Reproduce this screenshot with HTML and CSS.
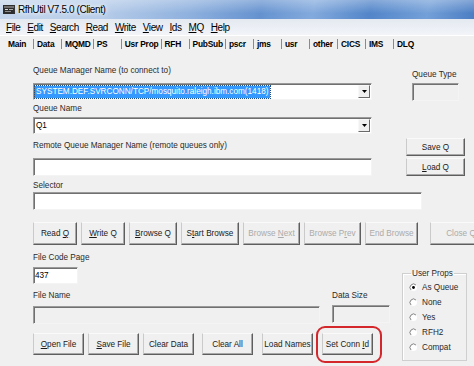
FILE: index.html
```html
<!DOCTYPE html>
<html lang="en">
<head>
    <meta charset="UTF-8">
    <meta name="viewport" content="width=device-width, initial-scale=1.0">
    <title>RfhUtil V7.5.0 (Client)</title>
    <link rel="stylesheet" href="styles.css">
</head>
<body>
    <div class="window">
        <div class="titlebar">
            <svg class="app-icon" viewBox="0 0 12 9" width="12" height="9">
                <rect width="12" height="9" fill="#2d2d2d"/>
                <rect x="1" y="1" width="10" height="2" fill="#707070"/>
                <rect x="2" y="4" width="3" height="1" fill="#d8d8d8"/>
                <rect x="6" y="4" width="4" height="1" fill="#b0b0b0"/>
                <rect x="2" y="6" width="6" height="1" fill="#8c8c8c"/>
            </svg>
            <span class="title">RfhUtil V7.5.0 (Client)</span>
        </div>

        <div class="menubar">
            <span><u>F</u>ile</span>
            <span><u>E</u>dit</span>
            <span><u>S</u>earch</span>
            <span><u>R</u>ead</span>
            <span><u>W</u>rite</span>
            <span><u>V</u>iew</span>
            <span><u>I</u>ds</span>
            <span><u>M</u>Q</span>
            <span><u>H</u>elp</span>
        </div>

        <div class="tabs">
            <span class="tab active">Main</span>
            <span class="tab">Data</span>
            <span class="tab">MQMD</span>
            <span class="tab">PS</span>
            <span class="tab">Usr Prop</span>
            <span class="tab">RFH</span>
            <span class="tab">PubSub</span>
            <span class="tab">pscr</span>
            <span class="tab">jms</span>
            <span class="tab">usr</span>
            <span class="tab">other</span>
            <span class="tab">CICS</span>
            <span class="tab">IMS</span>
            <span class="tab">DLQ</span>
        </div>

        <div class="client">
            <div class="frame-edge"></div>
            <div class="page">
                <!-- queue manager / queue -->
                <div class="top">
                    <div class="main-col">
                        <span class="lbl">Queue Manager Name (to connect to)</span>
                        <div class="combo">
                            <span class="selected">SYSTEM.DEF.SVRCONN/TCP/mosquito.raleigh.ibm.com(1418)</span>
                            <span class="drop-btn"><svg viewBox="0 0 5 3" width="5" height="3"><path d="M0 0h5L2.5 3z" fill="#000"/></svg></span>
                        </div>
                        <span class="lbl lbl-qn">Queue Name</span>
                        <div class="combo combo-qn">
                            <span class="value">Q1</span>
                            <span class="drop-btn"><svg viewBox="0 0 5 3" width="5" height="3"><path d="M0 0h5L2.5 3z" fill="#000"/></svg></span>
                        </div>
                        <span class="lbl">Remote Queue Manager Name (remote queues only)</span>
                        <div class="field"></div>
                    </div>
                    <div class="side-col">
                        <span class="lbl qtype-lbl">Queue Type</span>
                        <div class="field readonly qtype"></div>
                        <button class="btn btn-side save-q">Save Q</button>
                        <button class="btn btn-side load-q"><u>L</u>oad Q</button>
                    </div>
                </div>

                <span class="lbl lbl-sel">Selector</span>
                <div class="field selector"></div>

                <div class="btn-row browse-row">
                    <button class="btn">Read <u>Q</u></button>
                    <button class="btn"><u>W</u>rite Q</button>
                    <button class="btn"><u>B</u>rowse Q</button>
                    <button class="btn">S<u>t</u>art Browse</button>
                    <button class="btn" disabled>Browse <u>N</u>ext</button>
                    <button class="btn" disabled>Browse P<u>r</u>ev</button>
                    <button class="btn" disabled>End Browse</button>
                    <button class="btn close-q" disabled>Close Q</button>
                </div>

                <!-- file section -->
                <div class="bottom">
                    <div class="bottom-main">
                        <span class="lbl">File Code Page</span>
                        <div class="field codepage"><span class="value">437</span></div>
                        <div class="file-row">
                            <div class="file-name">
                                <span class="lbl">File Name</span>
                                <div class="field readonly"></div>
                            </div>
                            <div class="data-size">
                                <span class="lbl">Data Size</span>
                                <div class="field readonly"></div>
                            </div>
                        </div>
                        <div class="btn-row file-row-btns">
                            <button class="btn"><u>O</u>pen File</button>
                            <button class="btn"><u>S</u>ave File</button>
                            <button class="btn">Clear Data</button>
                            <button class="btn">Clear All</button>
                            <button class="btn">Load Names</button>
                            <span class="callout"><button class="btn">Set Conn <u>I</u>d</button></span>
                        </div>
                    </div>

                    <fieldset class="group">
                        <legend>User Props</legend>
                        <label class="radio">
                            <svg viewBox="0 0 12 12" width="9" height="9"><circle cx="6" cy="6" r="4.6" fill="#fff"/><path d="M9.3 2.7A4.6 4.6 0 0 0 2.7 9.3" stroke="#808080" stroke-width="1.3" fill="none"/><circle cx="6" cy="6" r="1.9" fill="#000"/></svg>
                            As Queue
                        </label>
                        <label class="radio">
                            <svg viewBox="0 0 12 12" width="9" height="9"><circle cx="6" cy="6" r="4.6" fill="#fff"/><path d="M9.3 2.7A4.6 4.6 0 0 0 2.7 9.3" stroke="#808080" stroke-width="1.3" fill="none"/></svg>
                            None
                        </label>
                        <label class="radio">
                            <svg viewBox="0 0 12 12" width="9" height="9"><circle cx="6" cy="6" r="4.6" fill="#fff"/><path d="M9.3 2.7A4.6 4.6 0 0 0 2.7 9.3" stroke="#808080" stroke-width="1.3" fill="none"/></svg>
                            Yes
                        </label>
                        <label class="radio">
                            <svg viewBox="0 0 12 12" width="9" height="9"><circle cx="6" cy="6" r="4.6" fill="#fff"/><path d="M9.3 2.7A4.6 4.6 0 0 0 2.7 9.3" stroke="#808080" stroke-width="1.3" fill="none"/></svg>
                            RFH2
                        </label>
                        <label class="radio">
                            <svg viewBox="0 0 12 12" width="9" height="9"><circle cx="6" cy="6" r="4.6" fill="#fff"/><path d="M9.3 2.7A4.6 4.6 0 0 0 2.7 9.3" stroke="#808080" stroke-width="1.3" fill="none"/></svg>
                            Compat
                        </label>
                    </fieldset>
                </div>
            </div>
        </div>
    </div>
</body>
</html>
```

FILE: styles.css
```css
* {
    margin: 0;
    padding: 0;
    box-sizing: border-box;
}

body {
    width: 474px;
    height: 366px;
    overflow: hidden;
    font-family: "Liberation Sans", Arial, sans-serif;
    background: #f0f0f0;
    color: #000;
}

.window {
    width: 474px;
    height: 366px;
}

/* title bar */
.titlebar {
    height: 19px;
    display: flex;
    align-items: center;
    padding-left: 3px;
    background:
        linear-gradient(180deg, rgba(255, 255, 255, 0.3), rgba(255, 255, 255, 0) 70%),
        linear-gradient(100deg, #c4d6ec 0%, #b6cce9 22%, #8fb1de 40%, #6592cf 55%, #83aadd 66%, #5285c9 78%, #74a0d8 90%, #4b7dc3 100%);
}

.app-icon {
    margin-right: 3px;
}

.title {
    font-size: 10px;
    letter-spacing: -0.4px;
    text-shadow: 0 0 4px #fff, 0 0 6px #fff;
}

/* menu */
.menubar {
    height: 17px;
    display: flex;
    align-items: center;
    gap: 7px;
    padding-left: 6px;
    font-size: 10px;
    letter-spacing: -0.45px;
    background: linear-gradient(#e4e9f1, #f2f4f8);
    border-bottom: 1px solid #fff;
}

/* tab strip */
.tabs {
    height: 16px;
    display: flex;
    align-items: center;
    padding-left: 5px;
    font-size: 8.4px;
    font-weight: bold;
    letter-spacing: -0.2px;
}

.tab {
    min-width: 28px;
    height: 10px;
    line-height: 10px;
    padding: 0 2px 0 3px;
    border-left: 1px solid #8a8a8a;
    white-space: nowrap;
}

.tab.active {
    border-left: none;
    padding-left: 3px;
}

/* client area */
.client {
    display: flex;
    height: 314px;
}

.frame-edge {
    width: 3px;
    margin-top: 3px;
    background: #5a86c2;
}

.page {
    flex: 1;
    padding: 12px 0 0 33px;
    font-size: 8.2px;
}

.lbl {
    display: block;
    height: 13px;
    line-height: 13px;
    margin-top: 5px;
    white-space: nowrap;
    color: #2a2a2a;
}

.main-col > .lbl:first-child,
.bottom-main > .lbl:first-child {
    margin-top: 0;
}

.top {
    display: flex;
}

.main-col {
    width: 339px;
}

.side-col {
    margin-left: 34px;
    width: 60px;
}

.field,
.combo {
    background: #fff;
    border: 1px solid;
    border-color: #9a9a9a #f4f4f4 #f4f4f4 #9a9a9a;
    box-shadow: inset 1px 1px #707070;
}

.field {
    height: 18px;
    margin-top: 6px;
}

.field.readonly {
    background: #f0f0f0;
}

.combo {
    height: 17px;
    margin-top: 6px;
    display: flex;
    align-items: center;
    padding-left: 1px;
}

.combo-qn {
    margin-top: 2px;
}

.lbl-qn {
    margin-top: 2px;
}

.value {
    padding-left: 1px;
    line-height: 15px;
}

.selected {
    background: #3399ff;
    color: #fff;
    line-height: 12px;
    padding: 0 1px;
    outline: 1px dotted #1a4f8c;
}

.drop-btn {
    margin-left: auto;
    margin-right: 1px;
    width: 12px;
    height: 13px;
    display: flex;
    align-items: center;
    justify-content: center;
    background: #f0f0f0;
    border: 1px solid;
    border-color: #f8f8f8 #6a6a6a #6a6a6a #f8f8f8;
}

.qtype-lbl {
    margin: 4px 0 0 6px;
}

.qtype {
    width: 47px;
    margin: 2px 0 0 6px;
}

/* buttons */
.btn {
    height: 23px;
    font-family: inherit;
    font-size: 8.2px;
    color: #1a1a1a;
    background: #f0f0f0;
    border: 1px solid;
    border-color: #fafafa #5e5e5e #5e5e5e #cacaca;
    box-shadow: inset -1px -1px #a8a8a8;
    white-space: nowrap;
}

.btn:disabled {
    color: #ababab;
}

.btn-side {
    display: block;
    width: 59px;
    height: 18px;
}

.save-q {
    margin-top: 37px;
}

.load-q {
    margin-top: 2px;
}

.lbl-sel {
    margin-top: 3px;
}

.selector {
    width: 389px;
    margin-top: 0;
}

.btn-row {
    display: grid;
    column-gap: 4px;
}

.browse-row {
    margin-top: 12px;
    grid-template-columns: 44px 44px 48px 58px 57px 57px 53px 70px;
}

.close-q {
    margin-left: 8px;
}

/* file section */
.bottom {
    display: flex;
    margin-top: 6px;
}

.bottom-main {
    width: 357px;
}

.codepage {
    width: 45px;
    height: 17px;
    margin-top: 3px;
}

.file-row {
    display: flex;
    gap: 12px;
}

.file-name {
    width: 287px;
}

.file-name .field {
    margin-top: 4px;
}

.data-size {
    width: 58px;
}

.data-size .field {
    margin-top: 3px;
}

.file-row-btns {
    margin-top: 9px;
    grid-template-columns: 51px 51px 51px 55px 56px 56px;
}

.file-row-btns .btn {
    width: 51px;
    height: 22px;
    justify-self: end;
}

.callout {
    position: relative;
    display: flex;
    justify-self: end;
}

.callout::after {
    content: '';
    position: absolute;
    left: -6px;
    right: -9px;
    top: -7px;
    bottom: -8px;
    border: 2px solid #d4272c;
    border-radius: 9px;
}

/* user props group */
.group {
    width: 65px;
    height: 93px;
    margin: 17px 0 0 12px;
    padding: 1px 0 0 6px;
    border: 1px solid #cfcfcf;
    box-shadow: inset 1px 1px #fff;
}

.group legend {
    font-size: 8.2px;
    line-height: 11px;
    padding: 0 1px;
    margin-left: 2px;
    color: #2a2a2a;
}

.radio {
    display: flex;
    align-items: center;
    gap: 4px;
    height: 15px;
    color: #2a2a2a;
}
```
